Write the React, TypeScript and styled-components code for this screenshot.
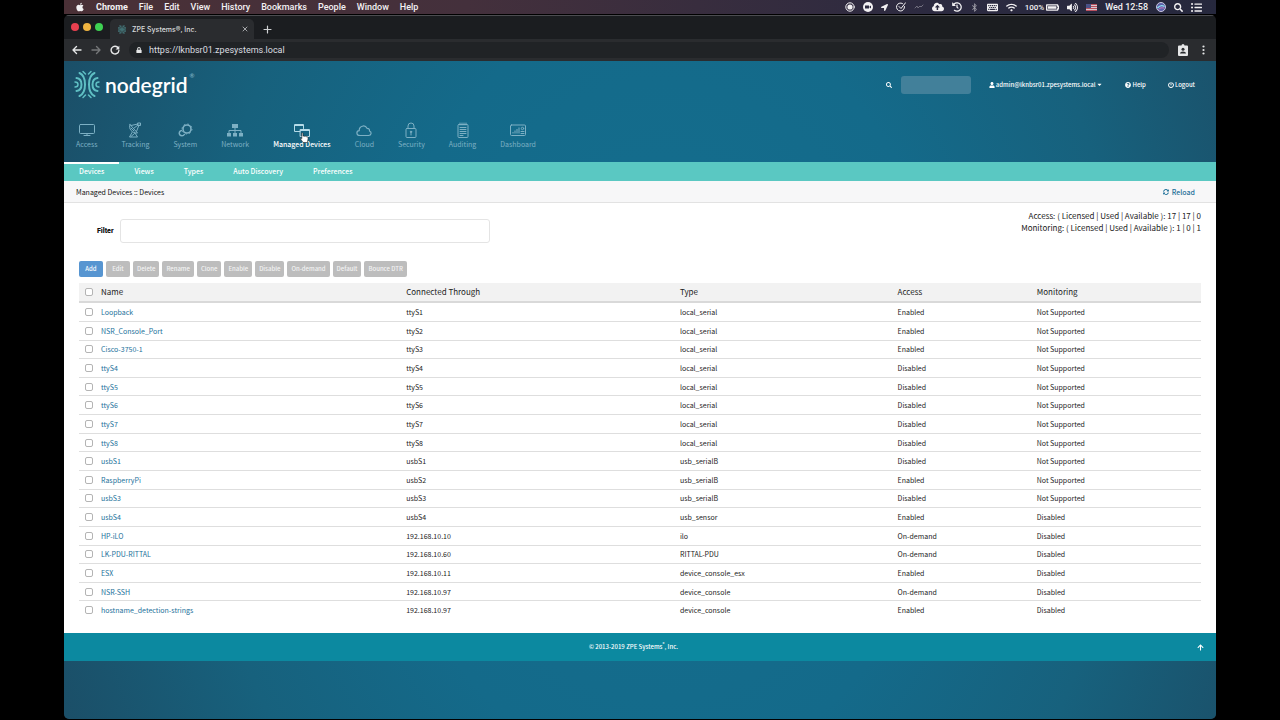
import React from "react";
import styled, { createGlobalStyle, css } from "styled-components";
import {
  FaApple,
  FaSearch,
  FaUser,
  FaQuestionCircle,
  FaPowerOff,
  FaSyncAlt,
  FaArrowUp,
  FaCaretDown,
  FaLock,
  FaLocationArrow,
  FaCloudUploadAlt,
  FaHistory,
  FaKeyboard,
  FaWifi,
  FaBatteryFull,
  FaVolumeUp,
  FaListUl,
  FaBluetoothB,
} from "react-icons/fa";

const appFont = `"Noto Sans CJK SC", "Open Sans", sans-serif`;
const systemFont = `Roboto, Inter, sans-serif`;

const GlobalStyle = createGlobalStyle`
  *, *::before, *::after { box-sizing: border-box; }
  body { margin: 0; background: #000; font-family: ${appFont}; font-size: 7px; color: #333; }
  button, input { font: inherit; }
  button { padding: 0; border: 0; background: none; color: inherit; cursor: pointer; }
  a { color: inherit; text-decoration: none; }
  svg { display: block; flex: none; }
`;

const Screen = styled.div`
  min-height: 100vh;
  margin: 0 5%;
  display: flex;
  flex-direction: column;
  background: #000;
`;

/* ---------- macOS menu bar ---------- */

const MenuBar = styled.header`
  height: 14px;
  display: flex;
  align-items: center;
  justify-content: space-between;
  padding: 0 14px 0 11px;
  background: linear-gradient(90deg, #4a3036 0%, #44303c 35%, #2c2a40 75%, #26283d 100%);
  color: #f3f1f3;
  font-family: ${systemFont};
  font-size: 9px;
  font-weight: 500;
`;

const MenuItems = styled.nav`
  display: flex;
  align-items: center;
  gap: 11px;
`;

const MenuItem = styled.button<{ $strong?: boolean }>`
  line-height: 14px;
  font-weight: ${(p) => (p.$strong ? 700 : 500)};
`;

const StatusItems = styled.div`
  display: flex;
  align-items: center;
  gap: 8px;
`;

const Percent = styled.span`
  display: flex;
  align-items: center;
  gap: 2px;
  font-size: 8px;
`;

/* ---------- browser chrome ---------- */

const BrowserWindow = styled.div`
  flex: 1;
  display: flex;
  flex-direction: column;
  margin: 1px 0;
  border-radius: 5px;
  overflow: hidden;
  background: #1b1d20;
  font-family: ${appFont};
`;

const TabStrip = styled.div`
  height: 24px;
  display: flex;
  align-items: flex-end;
  border-top: 1px solid #4b4c50;
`;

const TrafficLights = styled.div`
  display: flex;
  gap: 4px;
  padding: 0 7px 8px 7px;
`;

const Light = styled.span<{ $color: string }>`
  width: 8px;
  height: 8px;
  border-radius: 50%;
  background: ${(p) => p.$color};
`;

const Tab = styled.div`
  width: 144px;
  height: 20px;
  display: flex;
  align-items: center;
  gap: 4px;
  padding: 0 6px 0 8px;
  border-radius: 5px 5px 0 0;
  background: #2a2c2f;
  color: #d9dbdd;
  font-family: Inter, sans-serif;
  font-size: 7px;
  font-weight: 500;
`;

const TabTitle = styled.span`
  flex: 1;
  padding-left: 2px;
`;

const NewTab = styled.button`
  height: 20px;
  padding: 0 9px;
  color: #d0d2d4;
`;

const Toolbar = styled.div`
  height: 22px;
  display: flex;
  align-items: center;
  gap: 9px;
  padding: 0 11px 0 8px;
  background: #2a2c2f;
  color: #e6e7e8;
`;

const ToolbarEnd = styled.div`
  display: flex;
  align-items: center;
  gap: 14px;
`;

const AddressBar = styled.div`
  flex: 1;
  height: 16px;
  display: flex;
  align-items: center;
  gap: 7px;
  padding: 0 7px;
  border-radius: 8px;
  background: #202326;
`;

const AddressInput = styled.input`
  flex: 1;
  min-width: 0;
  padding: 0;
  border: 0;
  outline: 0;
  background: transparent;
  color: #dcdee0;
  font-family: ${systemFont};
  font-size: 9px;
  font-weight: 400;
  line-height: 14px;
`;

/* ---------- application header ---------- */

const Page = styled.div`
  flex: 1;
  display: flex;
  flex-direction: column;
  background: radial-gradient(ellipse 56% 130% at 52% 50%, #146f8f 0%, #146a8a 45%, #17617d 72%, #1b4f68 100%);
`;

const AppHeader = styled.header`
  color: #fff;
  display: flex;
  flex-direction: column;
`;

const TopRow = styled.div`
  display: flex;
  align-items: center;
  justify-content: space-between;
  height: 49px;
  padding: 0 21px 2px 10px;
`;

const Brand = styled.a`
  display: flex;
  align-items: center;
  gap: 5px;
`;

const BrandName = styled.span`
  display: flex;
  align-items: flex-start;
  font-family: Lato, sans-serif;
  font-size: 21px;
  font-weight: 600;
  line-height: 26px;
`;

const Registered = styled.small`
  font-size: 6px;
  line-height: 8px;
  color: #7fb2c5;
  padding-left: 2px;
`;

const UserArea = styled.div`
  display: flex;
  align-items: center;
  font-size: 6px;
  font-weight: 500;
`;

const SearchBox = styled.form`
  display: flex;
  align-items: center;
  gap: 9px;
  margin-right: 18px;
`;

const SearchInput = styled.input`
  width: 70px;
  height: 18px;
  padding: 0 4px;
  border: 0;
  border-radius: 3px;
  background: #42809a;
  color: #fff;
`;

const UserLink = styled.a`
  display: flex;
  align-items: center;
  gap: 1px;
  line-height: 10px;
  & + & { margin-left: 22px; }
`;

const MainNav = styled.nav`
  display: flex;
  gap: 24px;
  height: 52px;
  padding: 12px 12px 0;
`;

const NavItem = styled.a<{ $active?: boolean }>`
  position: relative;
  display: flex;
  flex-direction: column;
  align-items: center;
  font-size: 7px;
  line-height: 12px;
  font-weight: ${(p) => (p.$active ? 500 : 400)};
  color: ${(p) => (p.$active ? "#ffffff" : "#7db0c4")};
`;

const Pointer = styled.span`
  position: absolute;
  left: 50%;
  top: 10px;
  margin-left: -2px;
`;

const SubNav = styled.nav`
  display: flex;
  height: 19px;
  background: #5ac8c2;
  color: #fff;
`;

const SubNavItem = styled.a<{ $active?: boolean }>`
  padding: 0 15px;
  border-top: 2px solid transparent;
  font-weight: 500;
  line-height: 14px;
  ${(p) => p.$active && css`border-top-color: #fff;`}
`;

/* ---------- content ---------- */

const CrumbBar = styled.div`
  display: flex;
  align-items: center;
  justify-content: space-between;
  height: 22px;
  padding: 0 21px 0 12px;
  border-bottom: 1px solid #e2e2e2;
  background: #f7f7f8;
  line-height: 12px;
  color: #111;
`;

const Reload = styled.button`
  display: flex;
  align-items: center;
  gap: 3px;
  color: #1f7199;
  font-weight: 500;
`;

const Content = styled.main`
  padding: 5px 15px 14px;
  background: #fff;
`;

const FilterRow = styled.div`
  display: flex;
  justify-content: space-between;
  align-items: flex-start;
`;

const FilterField = styled.div`
  flex: 0 0 36.6%;
  display: flex;
  align-items: center;
  gap: 6px;
  padding: 11px 0 0 18px;
`;

const FilterLabel = styled.label`
  font-family: ${systemFont};
  font-weight: 900;
  color: #111;
`;

const FilterInput = styled.input`
  flex: 1;
  min-width: 0;
  height: 24px;
  padding: 0 6px;
  border: 1px solid #e4e4e4;
  border-radius: 3px;
  background: #fff;
`;

const Licences = styled.div`
  padding-top: 2px;
  font-size: 8px;
  line-height: 12px;
  text-align: right;
  color: #222;
`;

const Actions = styled.div`
  display: flex;
  gap: 3px;
  padding: 18px 0 6px;
`;

const ActionButton = styled.button<{ $primary?: boolean }>`
  min-width: 24px;
  height: 16px;
  padding: 0 4px;
  border-radius: 2px;
  background: ${(p) => (p.$primary ? "#5795d1" : "#bdbdbd")};
  color: ${(p) => (p.$primary ? "#fff" : "#f4f4f4")};
  font-size: 6px;
  font-weight: 500;
  line-height: 16px;
  white-space: nowrap;
`;

const DeviceTable = styled.table`
  width: 100%;
  height: 336px;
  table-layout: fixed;
  border-collapse: collapse;
  text-align: left;
  white-space: nowrap;
  color: #222;
`;

const HeadCell = styled.th<{ $width?: string }>`
  width: ${(p) => p.$width ?? "auto"};
  height: 19px;
  padding: 0 2px;
  border-bottom: 2px solid #d9d9d9;
  background: #f2f2f2;
  font-size: 8px;
  font-weight: 400;
  line-height: 12px;
`;

const Cell = styled.td`
  padding: 0 2px;
  border-top: 1px solid #dedede;
  line-height: 12px;
`;

const DeviceLink = styled.a`
  color: #21709a;
`;

const Check = styled.input`
  appearance: none;
  display: block;
  width: 8px;
  height: 8px;
  margin: 0 0 0 4px;
  border: 1px solid #b4b4b4;
  border-radius: 2px;
  background: #fff;
`;

const Footer = styled.footer`
  display: flex;
  align-items: center;
  height: 28px;
  padding: 0 12px 0 6px;
  background: #0c89a0;
  color: #fff;
  font-size: 6px;
  font-weight: 500;
`;

const Copyright = styled.span`
  flex: 1;
  text-align: center;
  line-height: 12px;
  sup { font-size: 4px; line-height: 0; }
`;

/* ---------- drawings ---------- */

const stroke = {
  fill: "none",
  stroke: "currentColor",
  strokeLinecap: "round" as const,
  strokeLinejoin: "round" as const,
};

const Logo = ({ size }: { size: number }) => (
  <svg width={size} height={size + Math.round(size / 9)} viewBox="0 0 26 29" {...stroke} stroke="#5fbfc3" strokeWidth="2">
    <path d="M9 1.500L11.500 4M17 1.500L14.500 4M9 27.500L11.500 25M17 27.500L14.500 25" strokeWidth="1.500" />
    <path d="M5.500 3C10 5 11 9.500 11 14.500S10 24 5.500 26M20.500 3C16 5 15 9.500 15 14.500S16 24 20.500 26" />
    <path d="M2.500 8c4 .5 5 3.500 5 6.500s-1 6-5 6.500M23.500 8c-4 .5-5 3.500-5 6.500s1 6 5 6.500" />
    <path d="M1 12c2.800 0 3 1 3 2.500S3.800 17 1 17M25 12c-2.800 0-3 1-3 2.500s.2 2.500 3 2.500" strokeWidth="1.500" />
  </svg>
);

const NavIcon = ({ children }: { children: React.ReactNode }) => (
  <svg width="18" height="16" viewBox="0 0 18 16" {...stroke}>
    {children}
  </svg>
);

const icons: Record<string, React.ReactNode> = {
  Access: (
    <NavIcon>
      <rect x="1.500" y="2.500" width="15" height="9" rx="1" />
      <path d="M9 11.500v2M6 13.500h6" />
    </NavIcon>
  ),
  Tracking: (
    <NavIcon>
      <path d="M4 2.500c-2 4 2 9 7.500 8.500L4 2.500zM7.500 6.500L12 3M5 3.500L12 2M10.500 9.500L13 3M6 10.500l-2.500 4.500h8L9 11M12 1h2.500v2.500H12z" />
      <path d="M5 6l3 3M5 14.500l3.500-3" />
    </NavIcon>
  ),
  System: (
    <NavIcon>
      <circle cx="11" cy="7" r="4" strokeWidth="1.600" />
      <circle cx="11" cy="7" r="5" strokeDasharray="1.500 2.400" strokeLinecap="butt" />
      <path d="M5.500 8.500a2.700 2.700 0 1 0 2.800 4" strokeWidth="1.500" />
    </NavIcon>
  ),
  Network: (
    <NavIcon>
      <g fill="currentColor" stroke="none">
        <rect x="6" y="2" width="6" height="4" />
        <rect x="1" y="11" width="4" height="3.500" />
        <rect x="7" y="11" width="4" height="3.500" />
        <rect x="13" y="11" width="4" height="3.500" />
      </g>
      <path d="M9 6v5M3 11V8.500h12V11" />
    </NavIcon>
  ),
  "Managed Devices": (
    <NavIcon>
      <g stroke="#b5dbe8">
        <path d="M7 9.500H1.500v-7h9v4M1.500 3.500h9" />
        <rect x="7.500" y="7.500" width="9" height="7" />
        <path d="M7.500 8.500h9" />
      </g>
    </NavIcon>
  ),
  Cloud: (
    <NavIcon>
      <path d="M5 13.500C1 13.500 1 9 4.200 8.700 4 4 10 2.200 12 6.300c2.500 0 2.600 1.600 2.500 2.700 2.500 1 2 4.500-1 4.500z" strokeWidth="1.200" />
    </NavIcon>
  ),
  Security: (
    <NavIcon>
      <rect x="4" y="6.500" width="10" height="9" rx="1" />
      <path d="M6 6.500V4a3 3 0 0 1 6 0v2.500M9 10v3" />
      <circle cx="9" cy="9.800" r=".7" fill="currentColor" />
    </NavIcon>
  ),
  Auditing: (
    <NavIcon>
      <rect x="4" y="2.500" width="10" height="13" rx="1" />
      <path d="M6 1v2M8 1v2M10 1v2M12 1v2M6 5.500h6M6 7.500h6M6 9.500h6M6 11.500h6M6 13.500h3" />
    </NavIcon>
  ),
  Dashboard: (
    <NavIcon>
      <rect x="1.500" y="3" width="15" height="10.500" rx="1" />
      <path d="M4 11.500V10M6 11.500V8.500M8 11.500V7M10 11.500V5.500" strokeLinecap="butt" />
      <circle cx="13.500" cy="6.500" r="1.200" />
      <path d="M12 9.500h3M12 11.500h3" />
    </NavIcon>
  ),
};

const HandPointer = () => (
  <svg width="9" height="11" viewBox="0 0 9 11" fill="#fff" stroke="#222" strokeWidth=".6" strokeLinejoin="round">
    <path d="M1.800 1c.6-.5 1.200 0 1.200.6v2.600l.8-.2.7.4.9-.2.700.5 1-.1c.8.3 1 .8 1 1.600 0 1.700-.6 2.500-.8 4.300H3C2.400 9 1 8.200.5 6.800c0-.7.7-.8 1.300-.1z" />
  </svg>
);

const RecordIcon = () => (
  <svg width="10" height="10" viewBox="0 0 10 10" {...stroke}>
    <circle cx="5" cy="5" r="4.200" />
    <circle cx="5" cy="5" r="2.600" fill="currentColor" stroke="none" />
  </svg>
);

const CameraIcon = () => (
  <svg width="10" height="10" viewBox="0 0 10 10">
    <circle cx="5" cy="5" r="5" fill="currentColor" />
    <path d="M2 3.500h4v3H2zM6.500 4.500L8 3.500v3L6.500 5.500z" fill="#2c2a40" />
  </svg>
);

const TickCircleIcon = () => (
  <svg width="10" height="10" viewBox="0 0 10 10" {...stroke}>
    <path d="M8.500 4.500a4 4 0 1 1-2-3M3 4.500l2 2L9.500.8" />
  </svg>
);

const WaveIcon = () => (
  <svg width="10" height="8" viewBox="0 0 10 8" {...stroke} opacity=".35">
    <path d="M1 5l2-2 1 2 2-2 1 1 2-2" />
  </svg>
);

const FlagIcon = () => (
  <svg width="11" height="7" viewBox="0 0 11 7">
    <rect width="11" height="7" fill="#d8c8cf" />
    <path d="M0 .5h11M0 2.500h11M0 4.500h11M0 6.500h11" stroke="#b8505e" />
    <rect width="5" height="4" fill="#4a5288" />
  </svg>
);

const SiriIcon = () => (
  <svg width="10" height="10" viewBox="0 0 10 10">
    <circle cx="5" cy="5" r="4.500" fill="#5b5fa8" stroke="#c9c6dd" />
    <path d="M1.500 6C4 3 6 3 8.500 4.500" stroke="#8fe0ee" strokeWidth="1.400" fill="none" />
    <path d="M2.500 7.500C5 5 6.500 6 8 6" stroke="#d77fc0" fill="none" />
  </svg>
);

const ArrowIcon = ({ flip }: { flip?: boolean }) => (
  <svg width="10" height="10" viewBox="0 0 10 10" {...stroke} strokeWidth="1.400" opacity={flip ? 0.4 : 1}>
    <path d={flip ? "M1 5h8M5.500 1.500L9 5 5.500 8.500" : "M9 5H1M4.500 1.500L1 5l3.500 3.500"} />
  </svg>
);

const RefreshIcon = () => (
  <svg width="10" height="10" viewBox="0 0 10 10" {...stroke} strokeWidth="1.400">
    <path d="M8.300 3A3.900 3.900 0 1 0 8.900 5.500" />
    <path d="M9.300.8v3.700H5.600z" fill="currentColor" stroke="none" />
  </svg>
);

const PlusIcon = () => (
  <svg width="9" height="9" viewBox="0 0 9 9" {...stroke} strokeWidth="1.200">
    <path d="M4.500 1v7M1 4.500h7" />
  </svg>
);

const CloseIcon = () => (
  <svg width="6" height="6" viewBox="0 0 6 6" {...stroke} stroke="#a5a7aa">
    <path d="M1 1l4 4M5 1L1 5" />
  </svg>
);

const ProfileIcon = () => (
  <svg width="10" height="12" viewBox="0 0 10 12">
    <path d="M1 1.500h2.500a1.500 1.500 0 0 1 3 0H9a1 1 0 0 1 1 1V11a1 1 0 0 1-1 1H1a1 1 0 0 1-1-1V2.500a1 1 0 0 1 1-1z" fill="currentColor" />
    <circle cx="5" cy="5.300" r="1.500" fill="#2a2c2f" />
    <path d="M2 9.500c0-2.700 6-2.700 6 0z" fill="#2a2c2f" />
  </svg>
);

const DotsIcon = () => (
  <svg width="3" height="10" viewBox="0 0 3 10" fill="currentColor">
    <circle cx="1.500" cy="1.500" r="1.100" />
    <circle cx="1.500" cy="5" r="1.100" />
    <circle cx="1.500" cy="8.500" r="1.100" />
  </svg>
);

/* ---------- data ---------- */

const menus = ["Chrome", "File", "Edit", "View", "History", "Bookmarks", "People", "Window", "Help"];
const sections = ["Access", "Tracking", "System", "Network", "Managed Devices", "Cloud", "Security", "Auditing", "Dashboard"];
const tabs = ["Devices", "Views", "Types", "Auto Discovery", "Preferences"];
const actions = ["Add", "Edit", "Delete", "Rename", "Clone", "Enable", "Disable", "On-demand", "Default", "Bounce DTR"];

const columns = [
  { title: "Name", width: "27.2%" },
  { title: "Connected Through", width: "24.4%" },
  { title: "Type", width: "19.4%" },
  { title: "Access", width: "12.4%" },
  { title: "Monitoring" },
];

const devices = [
  ["Loopback", "ttyS1", "local_serial", "Enabled", "Not Supported"],
  ["NSR_Console_Port", "ttyS2", "local_serial", "Enabled", "Not Supported"],
  ["Cisco-3750-1", "ttyS3", "local_serial", "Enabled", "Not Supported"],
  ["ttyS4", "ttyS4", "local_serial", "Disabled", "Not Supported"],
  ["ttyS5", "ttyS5", "local_serial", "Disabled", "Not Supported"],
  ["ttyS6", "ttyS6", "local_serial", "Disabled", "Not Supported"],
  ["ttyS7", "ttyS7", "local_serial", "Disabled", "Not Supported"],
  ["ttyS8", "ttyS8", "local_serial", "Disabled", "Not Supported"],
  ["usbS1", "usbS1", "usb_serialB", "Disabled", "Not Supported"],
  ["RaspberryPi", "usbS2", "usb_serialB", "Enabled", "Not Supported"],
  ["usbS3", "usbS3", "usb_serialB", "Disabled", "Not Supported"],
  ["usbS4", "usbS4", "usb_sensor", "Enabled", "Disabled"],
  ["HP-iLO", "192.168.10.10", "ilo", "On-demand", "Disabled"],
  ["LK-PDU-RITTAL", "192.168.10.60", "RITTAL-PDU", "On-demand", "Disabled"],
  ["ESX", "192.168.10.11", "device_console_esx", "Enabled", "Disabled"],
  ["NSR-SSH", "192.168.10.97", "device_console", "On-demand", "Disabled"],
  ["hostname_detection-strings", "192.168.10.97", "device_console", "Enabled", "Disabled"],
];

export default function App() {
  return (
    <Screen>
      <GlobalStyle />
      <MenuBar>
        <MenuItems>
          <FaApple size={10} />
          {menus.map((m, i) => (
            <MenuItem key={m} $strong={i === 0}>{m}</MenuItem>
          ))}
        </MenuItems>
        <StatusItems>
          <RecordIcon />
          <CameraIcon />
          <FaLocationArrow size={7} />
          <TickCircleIcon />
          <WaveIcon />
          <FaCloudUploadAlt size={12} />
          <FaHistory size={10} />
          <FaBluetoothB size={9} opacity={0.6} />
          <FaKeyboard size={11} />
          <FaWifi size={11} />
          <Percent>
            100% <FaBatteryFull size={13} />
          </Percent>
          <FaVolumeUp size={11} />
          <FlagIcon />
          <span>Wed 12:58</span>
          <SiriIcon />
          <FaSearch size={9} />
          <FaListUl size={11} />
        </StatusItems>
      </MenuBar>

      <BrowserWindow>
        <TabStrip>
          <TrafficLights>
            <Light $color="#e8404f" />
            <Light $color="#efb440" />
            <Light $color="#3ed152" />
          </TrafficLights>
          <Tab>
            <Logo size={8} />
            <TabTitle>ZPE Systems®, Inc.</TabTitle>
            <button aria-label="Close tab"><CloseIcon /></button>
          </Tab>
          <NewTab aria-label="New tab"><PlusIcon /></NewTab>
        </TabStrip>
        <Toolbar>
          <button aria-label="Back"><ArrowIcon /></button>
          <button aria-label="Forward"><ArrowIcon flip /></button>
          <button aria-label="Reload page"><RefreshIcon /></button>
          <AddressBar>
            <FaLock size={6} />
            <AddressInput aria-label="Address" defaultValue="https://lknbsr01.zpesystems.local" />
          </AddressBar>
          <ToolbarEnd>
            <button aria-label="Profile"><ProfileIcon /></button>
            <button aria-label="Browser menu"><DotsIcon /></button>
          </ToolbarEnd>
        </Toolbar>

        <Page>
          <AppHeader>
            <TopRow>
              <Brand href="#">
                <Logo size={26} />
                <BrandName>
                  nodegrid<Registered>®</Registered>
                </BrandName>
              </Brand>
              <UserArea>
                <SearchBox>
                  <FaSearch size={6} />
                  <SearchInput aria-label="Search" />
                </SearchBox>
                <UserLink href="#">
                  <FaUser size={6} />
                  admin@lknbsr01.zpesystems.local
                  <FaCaretDown size={7} />
                </UserLink>
                <UserLink href="#">
                  <FaQuestionCircle size={6} />
                  Help
                </UserLink>
                <UserLink href="#">
                  <FaPowerOff size={6} />
                  Logout
                </UserLink>
              </UserArea>
            </TopRow>
            <MainNav>
              {sections.map((s) => {
                const active = s === "Managed Devices";
                return (
                  <NavItem key={s} href="#" $active={active}>
                    {icons[s]}
                    {s}
                    {active && <Pointer><HandPointer /></Pointer>}
                  </NavItem>
                );
              })}
            </MainNav>
          </AppHeader>
          <SubNav>
            {tabs.map((t, i) => (
              <SubNavItem key={t} href="#" $active={i === 0}>{t}</SubNavItem>
            ))}
          </SubNav>
          <CrumbBar>
            <span>Managed Devices :: Devices</span>
            <Reload>
              <FaSyncAlt size={6} />
              Reload
            </Reload>
          </CrumbBar>
          <Content>
            <FilterRow>
              <FilterField>
                <FilterLabel htmlFor="filter">Filter</FilterLabel>
                <FilterInput id="filter" />
              </FilterField>
              <Licences>
                <div>Access: ( Licensed | Used | Available ): 17 | 17 | 0</div>
                <div>Monitoring: ( Licensed | Used | Available ): 1 | 0 | 1</div>
              </Licences>
            </FilterRow>
            <Actions>
              {actions.map((a, i) => (
                <ActionButton key={a} $primary={i === 0}>{a}</ActionButton>
              ))}
            </Actions>
            <DeviceTable>
              <thead>
                <tr>
                  <HeadCell $width="20px">
                    <Check type="checkbox" aria-label="Select all devices" />
                  </HeadCell>
                  {columns.map((c) => (
                    <HeadCell key={c.title} $width={c.width}>{c.title}</HeadCell>
                  ))}
                </tr>
              </thead>
              <tbody>
                {devices.map(([name, ...rest]) => (
                  <tr key={name}>
                    <Cell>
                      <Check type="checkbox" aria-label={`Select ${name}`} />
                    </Cell>
                    <Cell>
                      <DeviceLink href="#">{name}</DeviceLink>
                    </Cell>
                    {rest.map((value, i) => (
                      <Cell key={i}>{value}</Cell>
                    ))}
                  </tr>
                ))}
              </tbody>
            </DeviceTable>
          </Content>
          <Footer>
            <Copyright>
              © 2013-2019 ZPE Systems<sup>®</sup>, Inc.
            </Copyright>
            <a href="#" aria-label="Back to top"><FaArrowUp size={7} /></a>
          </Footer>
        </Page>
      </BrowserWindow>
    </Screen>
  );
}
